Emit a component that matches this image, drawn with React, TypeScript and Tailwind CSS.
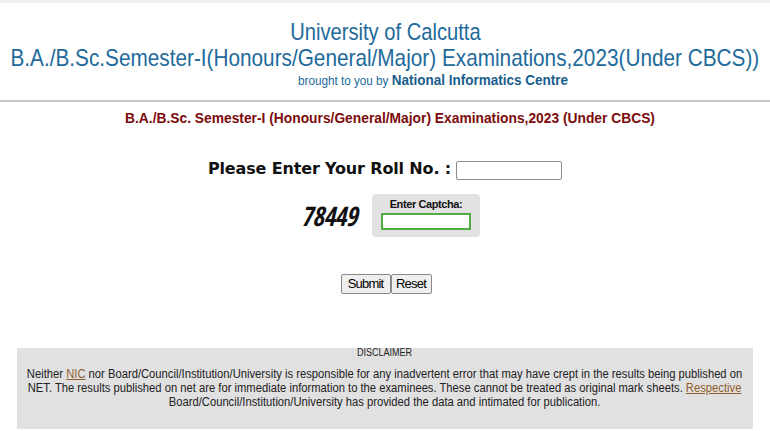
const link = 'underline text-[#8f5e2c]';

export default function App() {
  return (
    <div className="min-h-[431px] overflow-hidden bg-white font-['Liberation_Sans',Arial,sans-serif]">
      <div className="h-[3px] bg-[#f0f0f0]" />

      {/* page heading */}
      <header className="pt-[16px] pb-[10px] text-center text-[#216a9b] border-b-2 border-[#c9c9c9]">
        <div className="flex justify-center">
          <h1 className="shrink-0 whitespace-nowrap text-[24px] leading-[26px] scale-x-[0.84]">University of Calcutta</h1>
        </div>
        <div className="flex justify-center">
          <h2 className="shrink-0 whitespace-nowrap text-[24px] leading-[26px] scale-x-[0.865]">
            B.A./B.Sc.Semester-I(Honours/General/Major) Examinations,2023(Under CBCS))
          </h2>
        </div>
        <div className="ml-[96px] flex justify-center">
          <p className="shrink-0 whitespace-nowrap text-[13px] leading-[18px] scale-x-[0.9]">
            brought to you by <b className="text-[15px] text-[#175d8d]">National Informatics Centre</b>
          </p>
        </div>
      </header>

      <div className="mt-[7px] ml-[10px] flex justify-center">
        <h3 className="shrink-0 whitespace-nowrap text-[15px] leading-[18px] font-bold text-[#7c0b0b] scale-x-[0.92]">
          B.A./B.Sc. Semester-I (Honours/General/Major) Examinations,2023 (Under CBCS)
        </h3>
      </div>

      <form className="mt-[31px] flex flex-col items-center">
        <div className="flex items-center gap-[5px]">
          <label className="font-['DejaVu_Sans',Verdana,sans-serif] text-[16px] leading-[20px] tracking-[-0.15px] font-bold text-[#111]">
            Please Enter Your Roll No. :
          </label>
          <input className="mt-[3px] h-[19px] w-[106px] border border-[#8c8c8c] rounded-[2px] bg-white" />
        </div>

        <div className="mt-[14px] ml-[12px] flex items-center gap-[16px]">
          <div className="w-[54px] flex justify-center">
            <span className="shrink-0 font-['Open_Sans_Condensed','Roboto_Condensed',sans-serif] text-[27px] leading-[28px] font-bold italic tracking-[-0.5px] text-[#111] scale-x-[0.93]">
              78449
            </span>
          </div>
          <div className="w-[108px] h-[43px] rounded-[4px] bg-[#e2e2e2] flex flex-col items-center pt-[4px]">
            <span className="text-[11px] leading-[13px] tracking-[-0.4px] font-bold text-[#111]">Enter Captcha:</span>
            <input className="mt-[2px] h-[17px] w-[90px] border-2 border-[#4cae3c] bg-white" />
          </div>
        </div>

        <div className="mt-[37px] ml-[2px] flex">
          <button type="button" className="w-[50px] h-[20px] text-[13px] leading-[18px] tracking-[-0.8px] text-black border border-[#8a8a8a] bg-[#efefef] rounded-[2px]">
            Submit
          </button>
          <button type="button" className="w-[41px] h-[20px] text-[13px] leading-[18px] tracking-[-0.8px] text-black border border-[#8a8a8a] bg-[#efefef] rounded-[2px]">
            Reset
          </button>
        </div>
      </form>

      {/* disclaimer */}
      <section className="mx-[17px] mt-[54px] h-[81px] bg-[#e1e1e1] text-center text-[#222]">
        <div className="flex justify-center">
          <p className="shrink-0 text-[10px] leading-[10px] scale-x-[0.9]">DISCLAIMER</p>
        </div>
        <div className="mt-[9px] flex justify-center">
          <p className="shrink-0 w-max text-[12px] leading-[14px] scale-x-[0.935]">
            Neither <a className={link}>NIC</a> nor Board/Council/Institution/University is responsible for any inadvertent error that may have crept in the results being published on
            <br />
            NET. The results published on net are for immediate information to the examinees. These cannot be treated as original mark sheets. <a className={link}>Respective</a>
            <br />
            Board/Council/Institution/University has provided the data and intimated for publication.
          </p>
        </div>
      </section>
    </div>
  );
}
